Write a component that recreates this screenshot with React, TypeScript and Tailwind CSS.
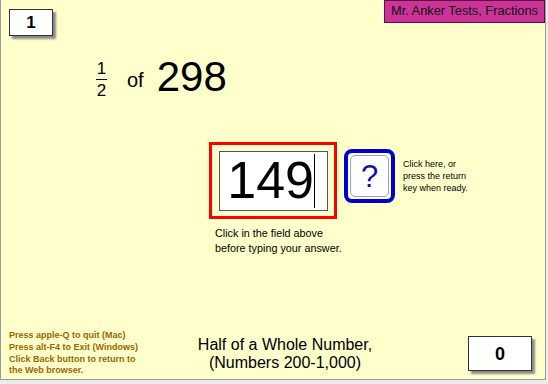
import React from "react";

export default function App() {
  const font = { fontFamily: '"Liberation Sans", Arial, sans-serif' };
  return (
    <div className="w-[548px] h-[384px] bg-[#ececec] overflow-hidden" style={font}>
      <div className="w-[546px] h-[380px] bg-[#ffffcc] border-l border-r border-b border-[#9a9a9a] flex flex-col text-black">
        {/* Top row */}
        <div className="h-[37px] flex justify-between items-start">
          <div className="ml-[8px] mt-[9px] w-[44px] h-[27px] bg-white border border-[#333] shadow-[3px_3px_2px_#8a8a8a] flex items-center justify-center font-bold text-[17px] leading-none">
            1
          </div>
          <div className="w-[161px] h-[23px] bg-[#cc3399] border border-[#5a1040] flex items-center pl-[6px] text-[12.8px] leading-none text-[#111]">
            Mr. Anker Tests, Fractions
          </div>
        </div>

        {/* Fraction row */}
        <div className="mt-[19px] flex items-start pl-[95px]">
          <div className="mt-[4px] w-[11px] flex flex-col items-center">
            <div className="text-[17px] leading-[17px]">1</div>
            <div className="mt-[2px] h-px w-[11px] bg-black" />
            <div className="mt-[2px] text-[17px] leading-[17px]">2</div>
          </div>
          <div className="ml-[20px] mt-[14px] text-[20px] leading-[20px]">of</div>
          <div className="ml-[13px] text-[42px] leading-[42px]">298</div>
        </div>

        {/* Answer row */}
        <div className="mt-[43px] flex items-start pl-[208px]">
          <div className="w-[128px] h-[77px] border-[3px] border-[#ff0000]">
            <div className="ml-[7px] mt-[6px] w-[109px] h-[60px] bg-white border border-[#555] flex justify-end items-center pr-[12px]">
              <div className="self-start mt-[2px] text-[52px] leading-[52px]">149</div>
              <div className="w-px h-[54px] bg-black" />
            </div>
          </div>
          <div className="ml-[7px] mt-[7px] w-[51px] h-[54px] rounded-[8px] border-[4px] border-[#0000cc] bg-white p-[2px]">
            <div className="w-full h-full rounded-[5px] border border-[#9a9ad8] flex items-center justify-center text-[31px] leading-none text-[#1010b0]">
              ?
            </div>
          </div>
          <div className="ml-[8px] mt-[16px] text-[9px] leading-[12px] text-black">
            <div>Click here, or</div>
            <div>press the return</div>
            <div>key when ready.</div>
          </div>
        </div>

        {/* Caption */}
        <div className="mt-[7px] pl-[214px] text-[10.8px] leading-[14.5px]">
          <div>Click in the field above</div>
          <div>before typing your answer.</div>
        </div>

        {/* Bottom row */}
        <div className="mt-auto flex items-end">
          <div className="w-[184px] pl-[8px] mb-[2px] text-[9px] leading-[11.7px] font-bold text-[#996600]">
            <div>Press apple-Q to quit (Mac)</div>
            <div>Press alt-F4 to Exit (Windows)</div>
            <div>Click Back button to return to</div>
            <div>the Web browser.</div>
          </div>
          <div className="w-[200px] mb-[7px] text-center text-[16px] leading-[18px]">
            <div>Half of a Whole Number,</div>
            <div>(Numbers 200-1,000)</div>
          </div>
          <div className="flex-1" />
          <div className="mr-[13px] mb-[8px] w-[64px] h-[35px] bg-white border border-[#333] shadow-[3px_3px_2px_#8a8a8a] flex items-center justify-center font-bold text-[18px] leading-none">
            0
          </div>
        </div>
      </div>
    </div>
  );
}
